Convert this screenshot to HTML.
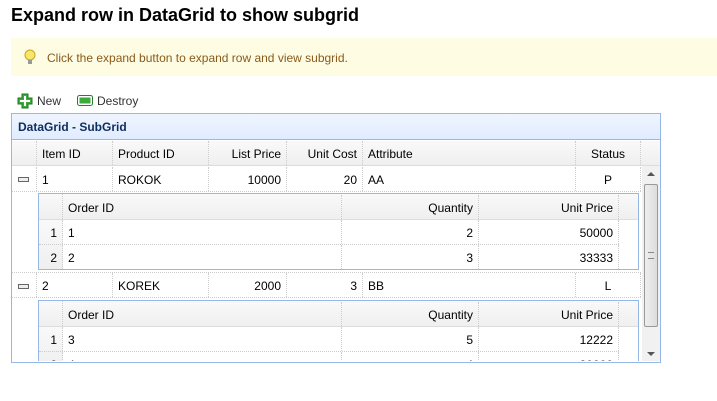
<!DOCTYPE html><html><head><style>
body{margin:0;width:717px;height:401px;background:#fff;font-family:"Liberation Sans",Arial,sans-serif;font-size:12px;color:#000;position:relative;overflow:hidden}
.a{position:absolute}
.t{white-space:nowrap;line-height:26px;height:24px;padding:0 5px;box-sizing:border-box}
.r{text-align:right}
.hd{background:linear-gradient(#f9f9f9,#efefef)}
.vl{border-right:1px dotted #ccc}
.hl{border-bottom:1px dotted #ccc}
</style></head><body>
<div class="a" style="left:11px;top:4px;font-size:18px;font-weight:bold;line-height:22px">Expand row in DataGrid to show subgrid</div>
<div class="a" style="left:11px;top:38px;width:706px;height:38px;background:#fefce3"></div>
<svg class="a" style="left:24px;top:49px" width="12" height="17" viewBox="0 0 12 17"><circle cx="6" cy="6" r="5" fill="#f7e66a" stroke="#c9a620"/><rect x="4" y="11" width="4" height="4" fill="#999"/></svg>
<div class="a" style="left:47px;top:50px;color:#8a5a1a;font-size:12px;line-height:16px">Click the expand button to expand row and view subgrid.</div>
<svg class="a" style="left:17px;top:93px" width="16" height="16"><path d="M5 1h6v4h4v6h-4v4H5v-4H1V5h4z" fill="#3cab3c" stroke="#1d7a1d"/><path d="M7 3h2v4h4v2H9v4H7V9H3V7h4z" fill="#fff"/></svg>
<div class="a" style="left:37px;top:93px;line-height:16px;color:#333">New</div>
<svg class="a" style="left:77px;top:95px" width="16" height="11"><rect x="0.5" y="0.5" width="15" height="10" rx="2" fill="#fff" stroke="#2a7d2a"/><rect x="2.5" y="2.5" width="11" height="6" fill="#3cab3c"/></svg>
<div class="a" style="left:97px;top:93px;line-height:16px;color:#333">Destroy</div>

<div class="a" style="left:11px;top:113px;width:648px;height:248px;border:1px solid #95b8e7"></div>
<div class="a" style="left:12px;top:114px;width:648px;height:26px;background:linear-gradient(#eff5ff,#e0ecff);border-bottom:1px solid #95b8e7;font-weight:bold;color:#0e2d5f;line-height:27px;padding-left:6px;box-sizing:border-box">DataGrid - SubGrid</div>
<!-- main header -->
<div class="a hd" style="left:12px;top:141px;width:648px;height:24px;border-bottom:1px solid #ddd"></div>
<div class="a t vl" style="left:12px;top:141px;width:25px"></div>
<div class="a t vl" style="left:37px;top:141px;width:76px">Item ID</div>
<div class="a t vl" style="left:113px;top:141px;width:96px">Product ID</div>
<div class="a t vl r" style="left:209px;top:141px;width:78px">List Price</div>
<div class="a t vl r" style="left:287px;top:141px;width:76px">Unit Cost</div>
<div class="a t vl" style="left:363px;top:141px;width:213px">Attribute</div>
<div class="a t vl" style="left:576px;top:141px;width:65px;text-align:center">Status</div>
<!-- row1 -->
<div class="a hl" style="left:12px;top:167px;width:629px;height:24px"></div>
<div class="a" style="left:18px;top:177px;width:9px;height:3px;border:1px solid #666;background:#eee"></div>
<div class="a t vl" style="left:12px;top:167px;width:25px"></div>
<div class="a t vl" style="left:37px;top:167px;width:76px">1</div>
<div class="a t vl" style="left:113px;top:167px;width:96px">ROKOK</div>
<div class="a t vl r" style="left:209px;top:167px;width:78px">10000</div>
<div class="a t vl r" style="left:287px;top:167px;width:76px">20</div>
<div class="a t vl" style="left:363px;top:167px;width:213px">AA</div>
<div class="a t vl" style="left:576px;top:167px;width:65px;text-align:center">P</div>
<!-- sub1 -->
<div class="a" style="left:38px;top:193px;width:601px;height:77px;border:1px solid #95b8e7;box-sizing:border-box"></div>
<div class="a hd" style="left:39px;top:194px;width:599px;height:25px;border-bottom:1px solid #ddd"></div>
<div class="a t vl" style="left:39px;top:194px;width:24px;height:25px"></div>
<div class="a t vl" style="left:63px;top:195px;width:279px">Order ID</div>
<div class="a t vl r" style="left:342px;top:195px;width:137px">Quantity</div>
<div class="a t vl r" style="left:479px;top:195px;width:140px">Unit Price</div>
<div class="a hd" style="left:39px;top:220px;width:24px;height:49px"></div>
<div class="a hl" style="left:39px;top:220px;width:580px;height:24px"></div>
<div class="a t vl r" style="left:39px;top:220px;width:24px">1</div>
<div class="a t vl" style="left:63px;top:220px;width:279px">1</div>
<div class="a t vl r" style="left:342px;top:220px;width:137px">2</div>
<div class="a t vl r" style="left:479px;top:220px;width:140px">50000</div>
<div class="a t vl r" style="left:39px;top:245px;width:24px">2</div>
<div class="a t vl" style="left:63px;top:245px;width:279px">2</div>
<div class="a t vl r" style="left:342px;top:245px;width:137px">3</div>
<div class="a t vl r" style="left:479px;top:245px;width:140px">33333</div>
<!-- row2 -->
<div class="a hl" style="left:12px;top:272px;width:629px;height:24px;border-top:1px dotted #ccc"></div>
<div class="a" style="left:18px;top:284px;width:9px;height:3px;border:1px solid #666;background:#eee"></div>
<div class="a t vl" style="left:12px;top:273px;width:25px"></div>
<div class="a t vl" style="left:37px;top:273px;width:76px">2</div>
<div class="a t vl" style="left:113px;top:273px;width:96px">KOREK</div>
<div class="a t vl r" style="left:209px;top:273px;width:78px">2000</div>
<div class="a t vl r" style="left:287px;top:273px;width:76px">3</div>
<div class="a t vl" style="left:363px;top:273px;width:213px">BB</div>
<div class="a t vl" style="left:576px;top:273px;width:65px;text-align:center">L</div>
<!-- sub2 -->
<div class="a" style="left:38px;top:300px;width:601px;height:61px;border:1px solid #95b8e7;border-bottom:none;box-sizing:border-box;overflow:hidden">
<div class="a hd" style="left:0;top:0;width:599px;height:25px;border-bottom:1px solid #ddd"></div>
<div class="a t vl" style="left:0;top:0;width:24px;height:25px"></div>
<div class="a t vl" style="left:24px;top:1px;width:279px">Order ID</div>
<div class="a t vl r" style="left:303px;top:1px;width:137px">Quantity</div>
<div class="a t vl r" style="left:440px;top:1px;width:140px">Unit Price</div>
<div class="a hd" style="left:0;top:26px;width:24px;height:40px"></div>
<div class="a hl" style="left:0;top:26px;width:580px;height:24px"></div>
<div class="a t vl r" style="left:0;top:26px;width:24px">1</div>
<div class="a t vl" style="left:24px;top:26px;width:279px">3</div>
<div class="a t vl r" style="left:303px;top:26px;width:137px">5</div>
<div class="a t vl r" style="left:440px;top:26px;width:140px">12222</div>
<div class="a t vl r" style="left:0;top:51px;width:24px">2</div>
<div class="a t vl" style="left:24px;top:51px;width:279px">4</div>
<div class="a t vl r" style="left:303px;top:51px;width:137px">4</div>
<div class="a t vl r" style="left:440px;top:51px;width:140px">30000</div>
</div>
<!-- scrollbar -->
<div class="a" style="left:642px;top:166px;width:18px;height:195px;background:#f1f1f1"></div>
<div class="a" style="left:647px;top:172px;width:0;height:0;border:4px solid transparent;border-bottom-color:#555;border-top:none"></div>
<div class="a" style="left:644px;top:184px;width:14px;height:143px;border:1px solid #999;border-radius:2px;background:linear-gradient(90deg,#eee,#ddd);box-sizing:border-box"></div>
<div class="a" style="left:648px;top:252px;width:6px;height:5px;border-top:1px solid #888;border-bottom:1px solid #888"></div>
<div class="a" style="left:647px;top:352px;width:0;height:0;border:4px solid transparent;border-top-color:#555;border-bottom:none"></div>
</body></html>
